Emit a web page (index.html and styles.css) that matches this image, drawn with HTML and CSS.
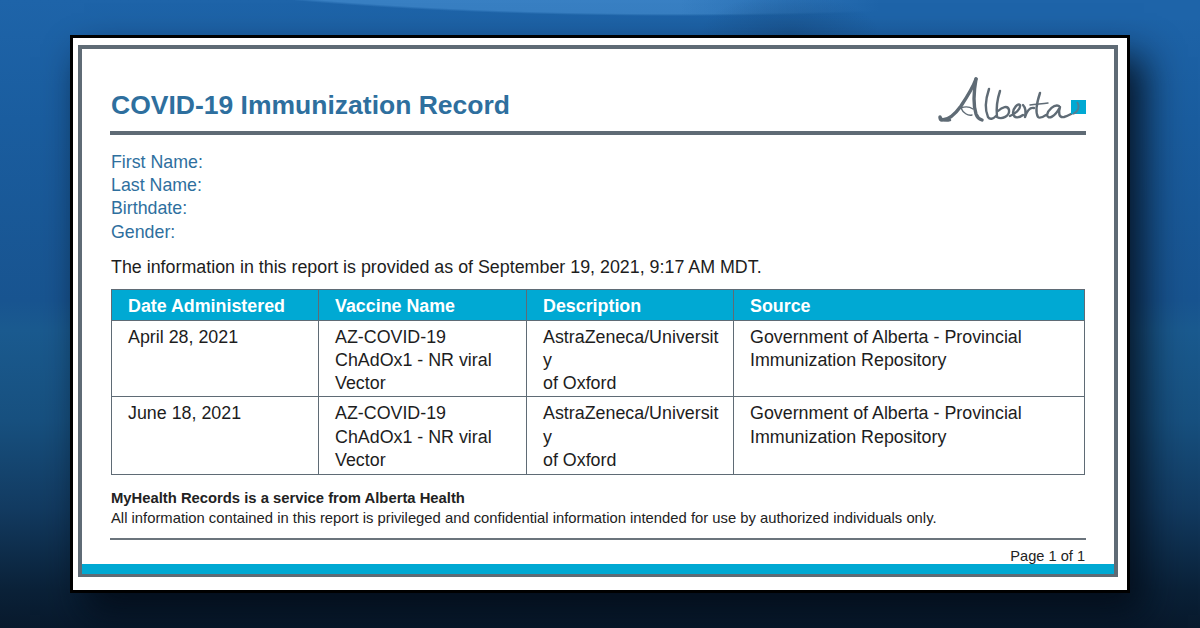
FILE: index.html
```html
<!DOCTYPE html>
<html lang="en">
<head>
<meta charset="utf-8">
<title>COVID-19 Immunization Record</title>
<link rel="stylesheet" href="styles.css">
</head>
<body>
<main class="frame">
  <div class="sheet">
    <header class="head">
      <h1 class="title">COVID-19 Immunization Record</h1>
      <svg class="logo" viewBox="0 0 165 60" aria-label="Alberta">
        <g class="ink">
          <path class="thick" d="M46 9C43 17 37 27 31 36C26 43 19 50 12 50C10 50 10 48 10 47"/>
          <path class="mid" d="M10 47C12 50 16 51 20 50"/>
          <path class="thick" d="M46 9C44 20 43 34 46 44C47 47 49 49 52 50"/>
          <path class="thin" d="M31 38C36 36 40 37 43 39"/>
          <path class="thin" d="M31 38C33 43 38 46 42 45"/>
          <path class="mid" d="M59 19C56 28 54 38 58 47C60 50 63 49 66 46"/>
          <path class="mid" d="M70 21C67 30 66 38 67 47C72 50 80 46 79 40C78 35 72 37 68 41"/>
          <path class="mid" d="M80 46C85 44 91 39 90 35C88 33 83 38 83 43C84 49 89 48 93 45"/>
          <path class="mid" d="M93 35C96 38 96 42 95 47C97 41 100 37 104 38"/>
          <path class="mid" d="M110 23C107 32 105 42 108 47C110 49 113 47 116 45"/>
          <path class="thin" d="M100 35C106 34 112 34 118 33"/>
          <path class="mid" d="M129 36C124 34 118 40 117 45C118 50 125 47 130 37C128 43 129 48 134 47C138 46 141 44 143 43"/>
        </g>
        <rect class="mark" x="141" y="30" width="15" height="14"/>
        <path class="mark-curl" d="M147 32C150 36 149 41 143 44"/>
      </svg>
    </header>

    <dl class="person">
      <dt>First Name:</dt>
      <dt>Last Name:</dt>
      <dt>Birthdate:</dt>
      <dt>Gender:</dt>
    </dl>

    <p class="asof">The information in this report is provided as of September 19, 2021, 9:17 AM MDT.</p>

    <table class="records">
      <thead>
        <tr>
          <th class="c1">Date Administered</th>
          <th class="c2">Vaccine Name</th>
          <th class="c3">Description</th>
          <th class="c4">Source</th>
        </tr>
      </thead>
      <tbody>
        <tr>
          <td>April 28, 2021</td>
          <td>AZ-COVID-19<br>ChAdOx1 - NR viral<br>Vector</td>
          <td>AstraZeneca/Universit<br>y<br>of Oxford</td>
          <td>Government of Alberta - Provincial<br>Immunization Repository</td>
        </tr>
        <tr>
          <td>June 18, 2021</td>
          <td>AZ-COVID-19<br>ChAdOx1 - NR viral<br>Vector</td>
          <td>AstraZeneca/Universit<br>y<br>of Oxford</td>
          <td>Government of Alberta - Provincial<br>Immunization Repository</td>
        </tr>
      </tbody>
    </table>

    <footer class="foot">
      <p class="foot-title">MyHealth Records is a service from Alberta Health</p>
      <p class="foot-text">All information contained in this report is privileged and confidential information intended for use by authorized individuals only.</p>
      <p class="page">Page 1 of 1</p>
    </footer>
    <div class="band"></div>
  </div>
</main>
</body>
</html>
```
FILE: styles.css
```css
* { box-sizing: border-box; }

html, body { margin: 0; height: 628px; overflow: hidden; }

body {
  padding: 35px 70px;
  font-family: "Liberation Sans", Arial, sans-serif;
  background:
    radial-gradient(ellipse 90px 40px at 790px 34px, rgba(22,70,120,.45), rgba(22,70,120,0)),
    linear-gradient(90deg, rgba(30,100,169,0) 680px, #1e64a9 880px) 0 0 / 100% 20px no-repeat,
    radial-gradient(ellipse 640px 76px at 680px -60px, #3b84c8 0, #387fc2 97%, rgba(56,127,194,0) 100%),
    linear-gradient(180deg, #1e64a9 0, #1a5d9f 120px, #185490 300px, #1a5a8f 330px, #17507f 420px, #123a60 510px, #0a2138 590px, #08192c 628px);
}

.frame {
  width: 1060px;
  height: 558px;
  padding: 7px 9px 13px 5px;
  background: #fff;
  border: 3px solid #000;
  box-shadow: 14px 22px 36px rgba(3, 12, 24, .9);
}

.sheet {
  height: 100%;
  display: flex;
  flex-direction: column;
  border: solid #5f6b75;
  border-width: 4px 4px 3px;
}

.head {
  margin: 0 28px;
  height: 86px;
  flex: none;
  display: flex;
  justify-content: space-between;
  border-bottom: 4px solid #5f6b75;
}

.title {
  margin: 40px 0 0 1px;
  font-size: 26.5px;
  line-height: 32px;
  font-weight: 700;
  color: #2e6f9e;
}

.logo { width: 165px; height: 60px; margin: 21px -9px 0 0; flex: none; filter: blur(.45px); }
.ink path { fill: none; stroke: #5f6b75; stroke-linecap: round; stroke-linejoin: round; }
.thick { stroke-width: 3.4; }
.mid { stroke-width: 2.4; }
.thin { stroke-width: 1.4; }
.mark { fill: #00a9d3; }
.mark-curl { fill: none; stroke: #4f7f95; stroke-width: 1.8; }

.person { margin: 16px 29px 0; font-size: 17.8px; line-height: 23.2px; color: #2e6f9e; }
.person dt { font-weight: 400; }

.asof { margin: 12px 29px 0; font-size: 17.85px; line-height: 23px; color: #1d1d1d; }

.records {
  margin: 10px 0 0 29px;
  width: 974px;
  flex: none;
  border-collapse: collapse;
  table-layout: fixed;
  font-size: 17.85px;
  line-height: 23.2px;
  color: #1d1d1d;
}

.records th, .records td {
  border: 1px solid #5f6b75;
  padding: 5px 4px 1px 16px;
  text-align: left;
  vertical-align: top;
}

.records tr:last-child td { padding-bottom: 2px; }

.records th {
  height: 31px;
  background: #00a9d3;
  color: #fff;
  font-weight: 700;
}

.c1 { width: 207px; }
.c2 { width: 208px; }
.c3 { width: 207px; }

.foot { margin: 0 28px; flex: 1; display: flex; flex-direction: column; }

.foot-title {
  margin: 14px 0 0 1px;
  font-size: 14.8px;
  line-height: 18px;
  font-weight: 700;
  color: #222;
}

.foot-text {
  margin: 2px 0 0;
  padding: 0 0 11px 1px;
  font-size: 14.8px;
  line-height: 18px;
  color: #222;
  border-bottom: 2px solid #6b747c;
}

.page {
  margin: 8px 1px 0 0;
  text-align: right;
  font-size: 14.6px;
  line-height: 16px;
  color: #222;
}

.band { height: 10px; flex: none; background: #00a9d3; }
```
